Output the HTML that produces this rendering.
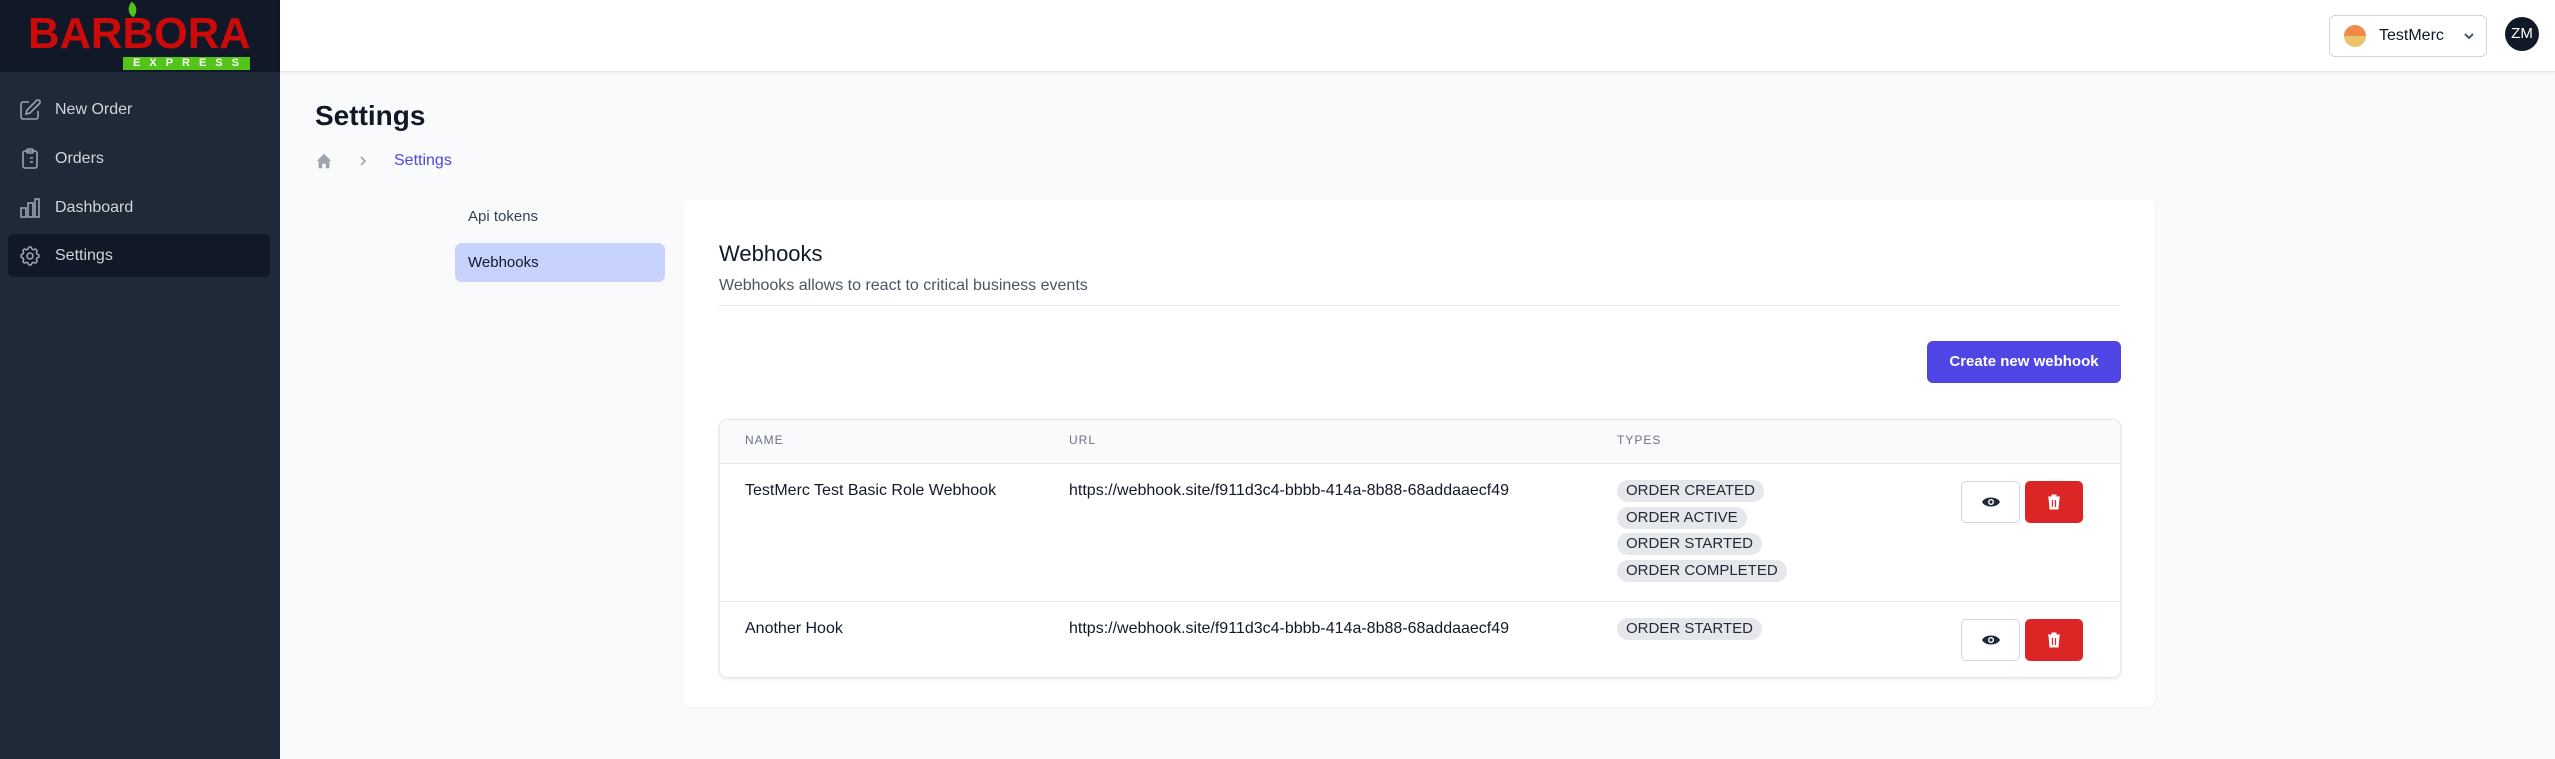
<!DOCTYPE html>
<html><head><meta charset="utf-8"><style>
*{box-sizing:border-box;margin:0;padding:0}
body{width:2555px;height:759px;overflow:hidden;background:#f9fafb;font-family:"Liberation Sans",sans-serif;color:#111827;position:relative}
.abs{position:absolute}
.side{left:0;top:0;width:280px;height:759px;background:#1f2937}
.logo{left:0;top:0;width:280px;height:72px;background:#111827}
.nav{left:8px;width:262px;height:43px;color:#d1d5db;font-size:16px;display:flex;align-items:center;padding-left:10px;border-radius:6px}
.nav svg{width:24px;height:24px;margin-right:13px;stroke:#9ca3af;fill:none;stroke-width:1.6}
.hdr{left:280px;top:0;width:2275px;height:72px;background:#fff;border-bottom:1px solid #e5e7eb;box-shadow:0 1px 3px rgba(0,0,0,.08)}
.card{left:683px;top:199px;width:1472px;height:508px;background:#fff;border-radius:8px;box-shadow:0 1px 2px rgba(0,0,0,.05)}
.th{font-size:12px;letter-spacing:1px;color:#6b7280}
.td{font-size:16px;color:#111827}
.badge{left:1617px;height:22px;line-height:22px;padding:0 9px;background:#e5e7eb;border-radius:11px;font-size:15px;color:#1f2937}
.bv{width:59px;height:42px;border:1px solid #d1d5db;border-radius:5px;background:#fff;display:flex;align-items:center;justify-content:center}
.bd{width:58px;height:42px;border-radius:5px;background:#dc2626;display:flex;align-items:center;justify-content:center}
</style></head><body>
<div class="abs side"></div>
<div class="abs logo">
<div class="abs" style="left:28px;top:12px;font-size:44px;font-weight:bold;color:#cc0a0a;line-height:44px;transform:scaleX(0.99);transform-origin:left">BARBORA</div>
<div class="abs" style="left:128px;top:3px;width:9px;height:13px;background:#52c41a;border-radius:0 10px 0 10px;transform:rotate(25deg)"></div>
<div class="abs" style="left:123px;top:57px;width:127px;height:13px;background:#52c41a;color:#fff;font-size:11px;font-weight:bold;letter-spacing:9px;line-height:13px;text-align:center;padding-left:8px">EXPRESS</div>
</div>
<div class="abs nav" style="top:88px"><svg viewBox="0 0 24 24"><path d="M11 4H5a2 2 0 0 0-2 2v13a2 2 0 0 0 2 2h13a2 2 0 0 0 2-2v-6"/><path d="M18.5 2.5a2.1 2.1 0 0 1 3 3L12 15l-4 1 1-4z"/></svg>New Order</div>
<div class="abs nav" style="top:137px"><svg viewBox="0 0 24 24"><rect x="5" y="4" width="14" height="17" rx="2"/><rect x="9" y="2" width="6" height="4" rx="1"/><path d="M9 11h.01M12 11h3M9 15h.01M12 15h3"/></svg>Orders</div>
<div class="abs nav" style="top:186px"><svg viewBox="0 0 24 24"><rect x="3" y="12" width="5" height="9"/><rect x="10" y="7" width="5" height="14"/><rect x="17" y="3" width="4" height="18"/></svg>Dashboard</div>
<div class="abs nav" style="top:234px;background:#111827"><svg viewBox="0 0 24 24"><path d="M10.3 4.3c.4-1.8 3-1.8 3.4 0a1.7 1.7 0 0 0 2.6 1.1c1.5-.9 3.3.8 2.4 2.4a1.7 1.7 0 0 0 1 2.5c1.8.4 1.8 3 0 3.4a1.7 1.7 0 0 0-1 2.6c.9 1.5-.9 3.3-2.4 2.4a1.7 1.7 0 0 0-2.6 1c-.4 1.8-3 1.8-3.4 0a1.7 1.7 0 0 0-2.6-1c-1.5.9-3.3-.9-2.4-2.4a1.7 1.7 0 0 0-1-2.6c-1.8-.4-1.8-3 0-3.4a1.7 1.7 0 0 0 1-2.5c-.9-1.6.9-3.3 2.4-2.4a1.7 1.7 0 0 0 2.6-1.1z"/><circle cx="12" cy="12" r="3"/></svg>Settings</div>
<div class="abs hdr"></div>
<div class="abs" style="left:2329px;top:15px;width:158px;height:42px;border:1px solid #d1d5db;border-radius:6px;background:#fff"></div>
<div class="abs" style="left:2344px;top:25px;width:22px;height:22px;border-radius:50%;background:linear-gradient(#f08a4b 50%,#e9c46a 50%)"></div>
<div class="abs" style="left:2379px;top:25px;font-size:16px;line-height:22px;color:#111827">TestMerc</div>
<svg class="abs" style="left:2462px;top:29px" width="14" height="14" viewBox="0 0 14 14"><path d="M3 5l4 4 4-4" stroke="#4b5563" stroke-width="2" fill="none"/></svg>
<div class="abs" style="left:2505px;top:17px;width:34px;height:34px;border-radius:50%;background:#111827;color:#fff;font-size:15px;line-height:34px;text-align:center">ZM</div>
<div class="abs" style="left:315px;top:98px;font-size:28px;font-weight:bold;line-height:36px">Settings</div>
<svg class="abs" style="left:315px;top:152px" width="18" height="18" viewBox="0 0 20 20"><path d="M10 2L2 10h2v8h4v-5h4v5h4v-8h2z" fill="#9ca3af"/></svg>
<svg class="abs" style="left:356px;top:154px" width="14" height="14" viewBox="0 0 14 14"><path d="M5 3l4 4-4 4" stroke="#9ca3af" stroke-width="1.6" fill="none"/></svg>
<div class="abs" style="left:394px;top:152px;font-size:16px;color:#4f46e5;line-height:18px">Settings</div>
<div class="abs" style="left:468px;top:208px;font-size:15px;color:#374151">Api tokens</div>
<div class="abs" style="left:455px;top:243px;width:210px;height:39px;background:#c7d2fe;border-radius:7px;font-size:15px;color:#111827;line-height:39px;padding-left:13px">Webhooks</div>
<div class="abs card"></div>
<div class="abs" style="left:719px;top:241px;font-size:22px;color:#111827">Webhooks</div>
<div class="abs" style="left:719px;top:277px;font-size:16px;color:#4b5563">Webhooks allows to react to critical business events</div>
<div class="abs" style="left:719px;top:305px;width:1400px;height:1px;background:#e5e7eb"></div>
<div class="abs" style="left:1927px;top:341px;width:194px;height:42px;background:#4f46e5;border-radius:6px;color:#fff;font-size:15px;font-weight:bold;line-height:42px;text-align:center">Create new webhook</div>
<div class="abs" style="left:719px;top:419px;width:1402px;height:259px;border:1px solid #e5e7eb;border-radius:8px;background:#fff;box-shadow:0 1px 3px rgba(0,0,0,.1);overflow:hidden">
<div style="height:44px;background:#f9fafb;border-bottom:1px solid #e5e7eb"></div>
<div style="position:absolute;top:181px;left:0;right:0;height:1px;background:#e5e7eb"></div>
</div>
<div class="abs th" style="left:745px;top:433px">NAME</div>
<div class="abs th" style="left:1069px;top:433px">URL</div>
<div class="abs th" style="left:1617px;top:433px">TYPES</div>
<div class="abs td" style="left:745px;top:482px">TestMerc Test Basic Role Webhook</div>
<div class="abs td" style="left:1069px;top:482px">https://webhook.site/f911d3c4-bbbb-414a-8b88-68addaaecf49</div>
<div class="abs badge" style="top:480px">ORDER CREATED</div>
<div class="abs badge" style="top:507px">ORDER ACTIVE</div>
<div class="abs badge" style="top:533px">ORDER STARTED</div>
<div class="abs badge" style="top:560px">ORDER COMPLETED</div>
<div class="abs td" style="left:745px;top:620px">Another Hook</div>
<div class="abs td" style="left:1069px;top:620px">https://webhook.site/f911d3c4-bbbb-414a-8b88-68addaaecf49</div>
<div class="abs badge" style="top:618px">ORDER STARTED</div>
<div class="abs bv" style="left:1961px;top:481px"><svg width="20" height="14" viewBox="0 0 20 14"><path d="M1 7C4 1 16 1 19 7C16 13 4 13 1 7z" fill="#1f2937"/><circle cx="10" cy="7" r="3" fill="#fff"/><circle cx="10" cy="7" r="1.6" fill="#1f2937"/></svg></div>
<div class="abs bd" style="left:2025px;top:481px"><svg width="14" height="16" viewBox="0 0 14 16"><path d="M1 3h12M5 3V1h4v2M2 4h10l-1 11H3z" fill="#fff" stroke="#fff"/><path d="M5.5 6v7M8.5 6v7" stroke="#dc2626" stroke-width="1.2"/></svg></div>
<div class="abs bv" style="left:1961px;top:619px"><svg width="20" height="14" viewBox="0 0 20 14"><path d="M1 7C4 1 16 1 19 7C16 13 4 13 1 7z" fill="#1f2937"/><circle cx="10" cy="7" r="3" fill="#fff"/><circle cx="10" cy="7" r="1.6" fill="#1f2937"/></svg></div>
<div class="abs bd" style="left:2025px;top:619px"><svg width="14" height="16" viewBox="0 0 14 16"><path d="M1 3h12M5 3V1h4v2M2 4h10l-1 11H3z" fill="#fff" stroke="#fff"/><path d="M5.5 6v7M8.5 6v7" stroke="#dc2626" stroke-width="1.2"/></svg></div>
</body></html>
